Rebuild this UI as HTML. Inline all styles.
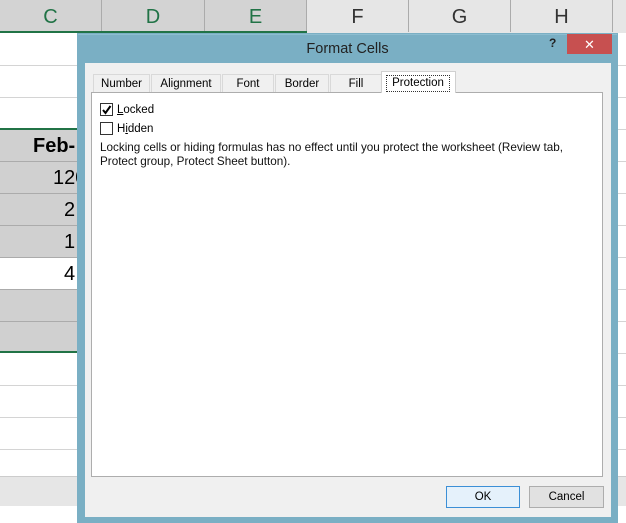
<!DOCTYPE html>
<html><head><style>
body{margin:0;width:626px;height:523px;overflow:hidden;position:relative;background:#fff;font-family:"Liberation Sans",sans-serif}
.a{position:absolute}
.hd{position:absolute;top:0;height:32px;font-size:20px;text-align:center;line-height:34px;color:#217346;border-right:1px solid #ababab;box-sizing:border-box}
.hl{height:1px;background:#d4d4d4;position:absolute}
.t{position:absolute;top:74px;height:18px;border:1px solid #d9d9d9;border-bottom:none;background:#f0f0f0;font-size:11.5px;line-height:18px;text-align:center;color:#000;box-sizing:border-box}
.cell{position:absolute;left:0;width:77px;height:32px;border-bottom:1px solid #ababab;box-sizing:border-box;font-size:20px;text-align:right;line-height:32px;overflow:hidden;white-space:nowrap}
</style></head><body>
<div class="a" style="left:0;top:0;width:626px;height:33px;background:#e6e6e6"></div>
<div class="hd" style="left:0;width:102px;background:#d3d3d3">C</div>
<div class="hd" style="left:102px;width:103px;background:#d3d3d3">D</div>
<div class="hd" style="left:205px;width:102px;background:#d3d3d3">E</div>
<div class="hd" style="left:307px;width:102px;color:#333;">F</div>
<div class="hd" style="left:409px;width:102px;color:#333">G</div>
<div class="hd" style="left:511px;width:102px;color:#333">H</div>
<div class="a" style="left:0;top:31px;width:307px;height:2px;background:#217346"></div>
<div class="hl" style="left:0;top:65px;width:80px"></div>
<div class="hl" style="left:0;top:97px;width:80px"></div>
<div class="a" style="left:0;top:128px;width:80px;height:2px;background:#217346"></div>
<div class="cell" style="top:130px;background:#d0d0d0;font-weight:bold;padding-right:0"><span style="position:absolute;left:33px">Feb-</span></div>
<div class="cell" style="top:162px;background:#d0d0d0"><span style="position:absolute;left:53px">120</span></div>
<div class="cell" style="top:194px;background:#d0d0d0"><span style="position:absolute;left:64px">2</span></div>
<div class="cell" style="top:226px;background:#d0d0d0"><span style="position:absolute;left:64px">1</span></div>
<div class="cell" style="top:258px;background:#fff"><span style="position:absolute;left:64px">4</span></div>
<div class="cell" style="top:290px;background:#d0d0d0"></div>
<div class="cell" style="top:322px;height:30px;background:#d0d0d0"></div>
<div class="a" style="left:0;top:351px;width:80px;height:2px;background:#217346"></div>
<div class="hl" style="left:0;top:385px;width:80px"></div>
<div class="hl" style="left:0;top:417px;width:80px"></div>
<div class="hl" style="left:0;top:449px;width:80px"></div>
<div class="a" style="left:0;top:476px;width:626px;height:29px;background:#e6e6e6;border-top:1px solid #ccc"></div>
<div class="hl" style="left:612px;top:65px;width:14px"></div>
<div class="hl" style="left:612px;top:97px;width:14px"></div>
<div class="hl" style="left:612px;top:129px;width:14px"></div>
<div class="hl" style="left:612px;top:161px;width:14px"></div>
<div class="hl" style="left:612px;top:193px;width:14px"></div>
<div class="hl" style="left:612px;top:225px;width:14px"></div>
<div class="hl" style="left:612px;top:257px;width:14px"></div>
<div class="hl" style="left:612px;top:289px;width:14px"></div>
<div class="hl" style="left:612px;top:321px;width:14px"></div>
<div class="hl" style="left:612px;top:353px;width:14px"></div>
<div class="hl" style="left:612px;top:385px;width:14px"></div>
<div class="hl" style="left:612px;top:417px;width:14px"></div>
<div class="hl" style="left:612px;top:449px;width:14px"></div>
<!-- dialog -->
<div class="a" style="left:77px;top:33px;width:541px;height:490px;background:#7aafc4"></div>
<div class="a" style="left:78px;top:34px;width:539px;height:1px;background:#8dbdd0"></div>
<div class="a" style="left:77px;top:33px;width:541px;height:30px;text-align:center;font-size:14.5px;line-height:32px;color:#222">Format Cells</div>
<div class="a" style="left:549px;top:36px;font-size:12px;font-weight:bold;color:#222">?</div>
<div class="a" style="left:567px;top:34px;width:45px;height:20px;background:#c75050;color:#fff;text-align:center;font-size:13px;line-height:21px">✕</div>
<div class="a" style="left:85px;top:63px;width:526px;height:454px;background:#f0f0f0"></div>
<div class="t" style="left:93px;width:57px">Number</div>
<div class="t" style="left:151px;width:70px">Alignment</div>
<div class="t" style="left:222px;width:52px">Font</div>
<div class="t" style="left:275px;width:54px">Border</div>
<div class="t" style="left:330px;width:52px">Fill</div>
<div class="a" style="left:381px;top:71px;width:75px;height:22px;background:#fff;border:1px solid #d0d0d0;border-bottom:none;box-sizing:border-box;z-index:2"></div>
<div class="a" style="left:386px;top:75px;width:62px;height:15px;border:1px dotted #333;font-size:11.5px;line-height:15px;text-align:center;z-index:3">Protection</div>
<div class="a" style="left:91px;top:92px;width:512px;height:385px;background:#fff;border:1px solid #adadad;box-sizing:border-box"></div>
<div class="a" style="left:100px;top:103px;width:11px;height:11px;border:1px solid #333;background:#fff"></div>
<svg class="a" style="left:101px;top:104px" width="12" height="12"><path d="M2 6 L4.5 9 L9.5 2" stroke="#000" stroke-width="2" fill="none"/></svg>
<div class="a" style="left:117px;top:104px;font-size:11.5px"><u>L</u>ocked</div>
<div class="a" style="left:100px;top:122px;width:11px;height:11px;border:1px solid #333;background:#fff"></div>
<div class="a" style="left:117px;top:123px;font-size:11.5px">H<u>i</u>dden</div>
<div class="a" style="left:100px;top:141px;font-size:11.7px;line-height:13.5px;color:#111">Locking cells or hiding formulas has no effect until you protect the worksheet (Review tab,<br>Protect group, Protect Sheet button).</div>
<div class="a" style="left:446px;top:486px;width:74px;height:22px;border:1px solid #3c8fd6;background:#e5f1fb;box-sizing:border-box;font-size:11.5px;text-align:center;line-height:20px">OK</div>
<div class="a" style="left:529px;top:486px;width:75px;height:22px;border:1px solid #adadad;background:#e1e1e1;box-sizing:border-box;font-size:11.5px;text-align:center;line-height:20px">Cancel</div>
</body></html>
